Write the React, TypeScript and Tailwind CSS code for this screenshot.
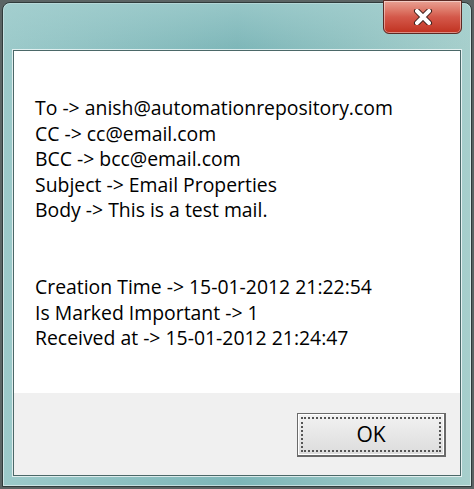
import React from "react";

export default function App() {
  const lines1 = [
    "To -> anish@automationrepository.com",
    "CC -> cc@email.com",
    "BCC -> bcc@email.com",
    "Subject -> Email Properties",
    "Body -> This is a test mail.",
  ];
  const lines2 = [
    "Creation Time -> 15-01-2012 21:22:54",
    "Is Marked Important -> 1",
    "Received at -> 15-01-2012 21:24:47",
  ];
  return (
    <div className="w-[474px] h-[489px] bg-[#5b6464] p-[2px] pt-[2px]" style={{ fontFamily: '"Open Sans", "Noto Sans", sans-serif' }}>
      <div className="w-full h-full flex flex-col rounded-t-[8px] border border-[#2f3b3b] bg-gradient-to-r from-[#9ccaca] via-[#7db6b8] to-[#a7cfcc] shadow-[inset_0_0_0_1px_rgba(255,255,255,0.5)]">
        <div className="h-[47px] flex justify-end pr-[9px] bg-gradient-to-b from-[#a8d2d2]/60 to-transparent rounded-t-[8px]">
          <div className="w-[79px] h-[34px] -mt-[3px] rounded-b-[6px] border border-[#5b2a24] bg-gradient-to-b from-[#e8a193] via-[#d4584a] to-[#c0301e] shadow-[inset_0_0_0_1px_rgba(255,255,255,0.45)] flex items-center justify-center">
            <svg width="20" height="16" viewBox="0 0 20 16">
              <path d="M4 2 L16 14 M16 2 L4 14" stroke="#3b1f1a" strokeWidth="6" strokeLinecap="round" />
              <path d="M4 2 L16 14 M16 2 L4 14" stroke="#ffffff" strokeWidth="4" strokeLinecap="round" />
            </svg>
          </div>
        </div>
        <div className="mx-[10px] mb-[10px] flex-1 flex flex-col border border-[#4b6868] shadow-[0_0_0_1px_rgba(255,255,255,0.7)]">
          <div className="bg-white h-[342px] pl-[21px] pt-[44px] text-[19.4px] leading-[25.6px] text-black">
            {lines1.map((l) => (
              <div key={l}>{l}</div>
            ))}
            <div className="h-[51px]" />
            {lines2.map((l) => (
              <div key={l}>{l}</div>
            ))}
          </div>
          <div className="flex-1 bg-[#f0f0f0] flex justify-end items-start pt-[20px] pr-[14px]">
            <div className="w-[149px] h-[44px] border border-[#6a6a6a] border-b-2 border-r-2 bg-gradient-to-b from-[#f2f2f2] to-[#dcdcdc] p-[3px] shadow-[inset_0_0_0_1px_#ffffff]">
              <div className="w-full h-full border-2 border-dotted border-[#555] flex items-center justify-center text-[21px] text-black">
                OK
              </div>
            </div>
          </div>
        </div>
      </div>
    </div>
  );
}
